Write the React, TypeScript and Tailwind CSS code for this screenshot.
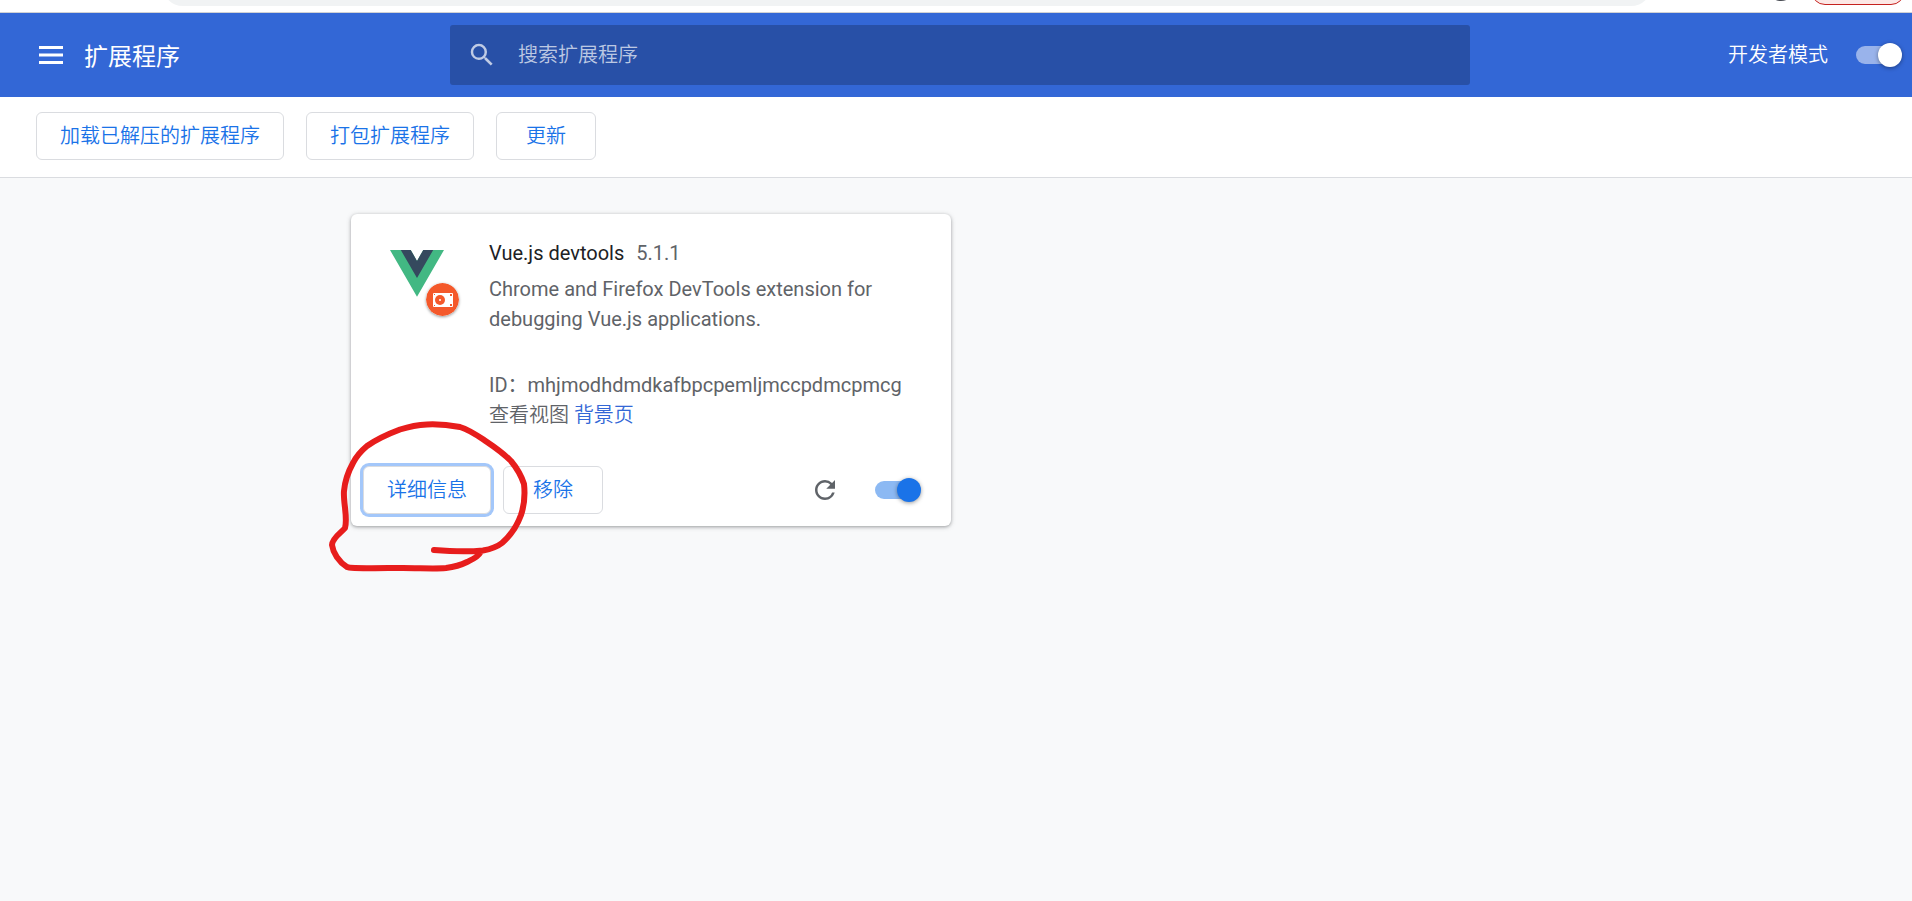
import { useState, type ReactNode } from 'react'
import { MdRefresh, MdSearch } from 'react-icons/md'

function ActionButton({ children, focused = false }: { children: ReactNode; focused?: boolean }) {
  return (
    <button
      type="button"
      className={`h-12 min-w-[100px] rounded-md border border-[#dadce0] bg-white px-[23px] text-xl font-[350] text-[#1a73e8] ${
        focused ? 'ring-3 ring-[#a3c7fa]' : ''
      }`}
    >
      {children}
    </button>
  )
}

function Toggle({ id, label, light = false }: { id: string; label: string; light?: boolean }) {
  const [on, setOn] = useState(true)
  return (
    <span className="relative flex h-6 w-[46px] items-center">
      <input
        id={id}
        type="checkbox"
        aria-label={label}
        checked={on}
        onChange={(e) => setOn(e.target.checked)}
        className={`h-[18px] w-[42px] cursor-pointer appearance-none rounded-full ${
          light ? 'bg-white/50' : 'bg-[#1a73e8]/50'
        }`}
      />
      <span
        className={`pointer-events-none absolute top-0 size-6 rounded-full shadow-[0_1px_4px_rgba(0,0,0,0.4)] ${
          on ? 'right-0' : 'left-0'
        } ${light ? 'bg-white' : 'bg-[#1a73e8]'}`}
      />
    </span>
  )
}

function BrowserStrip() {
  return (
    <div className="flex h-[13px] items-end overflow-hidden border-b border-[#d0d1d4] bg-white pr-[7px] pl-[162px]">
      <div className="mb-[6px] h-[42px] flex-1 rounded-full bg-[#f1f3f4]" />
      <div className="mb-[11px] ml-[115px] size-7 rounded-full bg-[#4a4d55]" />
      <div className="mb-[7px] ml-4 h-7 w-[94px] rounded-full border border-[#c5221f] bg-[#fce8e6]" />
    </div>
  )
}

function MenuIcon() {
  return (
    <svg viewBox="0 0 24 18" className="h-[18px] w-6" fill="currentColor" aria-hidden="true">
      <path d="M0 0h24v3H0zM0 7.5h24v3H0zM0 15h24v3H0z" />
    </svg>
  )
}

function VueLogo() {
  return (
    <svg viewBox="0 0 196 170" className="w-full" aria-hidden="true">
      <path fill="#42b883" d="M120.8 0 98 39.5 75.2 0H0l98 170L196 0z" />
      <path fill="#35495e" d="M120.8 0 98 39.5 75.2 0H39.2L98 102 156.8 0z" />
    </svg>
  )
}

function UnpackedBadge() {
  return (
    <svg
      viewBox="0 0 33 33"
      className="absolute -right-[15px] -bottom-[15px] size-[33px] rounded-full shadow-[0_1px_3px_rgba(0,0,0,0.4)]"
      aria-hidden="true"
    >
      <circle cx="16.5" cy="16.5" r="16.5" fill="#f4592b" />
      <rect x="7" y="10" width="20" height="14" rx="1" fill="#fff" />
      <circle cx="14" cy="17" r="5" fill="#f4592b" />
      <circle cx="14" cy="17" r="1" fill="#fff" />
      <path fill="#f4592b" d="M24 11h2v2h-2zM24 21h2v2h-2zM8 22h1v1h-1zM8 11h1v1h-1z" />
    </svg>
  )
}

// hand-drawn circle around the details button
function Marker() {
  return (
    <svg
      viewBox="327 418 205 160"
      className="pointer-events-none absolute top-[204px] -left-6 h-[160px] w-[205px]"
      fill="none"
      stroke="#e71d1c"
      strokeWidth="6"
      strokeLinecap="round"
      strokeLinejoin="round"
      aria-hidden="true"
    >
      <path d="M434 550C446 551 468 552 483 550.5C491 549 497 547 502 543C510 536 517 526 521 515C524 506 525 493 524 484C521 475 516 467 511 461C503 453 496 448 487 442C478 436 470 430 460 427C449 425 438 424 427 424.500C417 425 408 427 400 429.500C388 434 377 439 367 446C361 451 356 457 353 463C348 472 345 480 344 491C343 502 348 518 345 528C342 532 332 538 332 545C333 553 339 562 347 567C351 569 385 568 403 568C420 568 435 569 446 568C454 567 461 565 467 562C473 559 478 557 480 553" />
    </svg>
  )
}

function ExtensionCard() {
  return (
    <article className="relative flex h-[312px] flex-col rounded-md bg-white shadow-[0_1px_3px_rgba(60,64,67,0.3),0_1px_5px_rgba(60,64,67,0.25)]">
      <div className="flex flex-1 gap-[45px] pt-6 pr-6 pl-[39px] text-xl leading-[30px] text-[#5f6368]">
        <div className="relative mt-[9px] flex size-[54px] shrink-0 items-start pt-[3px]">
          <VueLogo />
          <UnpackedBadge />
        </div>
        <div>
          <div className="mb-[6px] flex gap-3">
            <h2 className="text-[#202124]">Vue.js devtools</h2>
            <span>5.1.1</span>
          </div>
          <p className="mb-[6px] min-h-[90px]">Chrome and Firefox DevTools extension for debugging Vue.js applications.</p>
          <div>ID：mhjmodhdmdkafbpcpemljmccpdmcpmcg</div>
          <div className="font-[350]">
            查看视图{' '}
            <a href="#background" className="text-[#3367d6]">
              背景页
            </a>
          </div>
        </div>
      </div>
      <div className="flex items-center gap-3 pr-[30px] pb-3 pl-3">
        <ActionButton focused>详细信息</ActionButton>
        <ActionButton>移除</ActionButton>
        <button type="button" aria-label="重新加载" className="mr-[23px] ml-auto text-[#5f6368]">
          <MdRefresh size={30} />
        </button>
        <Toggle id="enabled" label="启用" />
      </div>
      <Marker />
    </article>
  )
}

export default function App() {
  return (
    <div className="min-h-screen bg-[#f8f9fa] font-['Roboto','Noto_Sans_CJK_SC',sans-serif]">
      <BrowserStrip />
      <header className="grid h-[84px] grid-cols-[1fr_minmax(0,1020px)_1fr] items-center bg-[#3367d6] pl-2 text-white">
        <div className="flex items-center gap-[21px] pl-[31px]">
          <button type="button" aria-label="主菜单">
            <MenuIcon />
          </button>
          <h1 className="pt-1 text-2xl">扩展程序</h1>
        </div>
        <div className="flex h-[60px] items-center gap-[21px] rounded-[3px] bg-[#2850a7] pl-[17px]">
          <MdSearch size={30} className="text-white/70" />
          <input
            type="search"
            aria-label="搜索扩展程序"
            placeholder="搜索扩展程序"
            className="flex-1 bg-transparent text-xl font-[350] outline-none placeholder:text-white/70"
          />
        </div>
        <div className="flex items-center justify-end gap-7 pr-[10px]">
          <label htmlFor="dev-mode" className="text-xl font-[350]">
            开发者模式
          </label>
          <Toggle id="dev-mode" label="开发者模式" light />
        </div>
      </header>
      <div className="flex h-[81px] items-center gap-[22px] border-b border-[#dadce0] bg-white pb-0.5 pl-9">
        <ActionButton>加载已解压的扩展程序</ActionButton>
        <ActionButton>打包扩展程序</ActionButton>
        <ActionButton>更新</ActionButton>
      </div>
      <main className="pt-9 pl-2">
        <div className="mx-auto grid max-w-[1218px] grid-cols-2 gap-[18px]">
          <ExtensionCard />
        </div>
      </main>
    </div>
  )
}
